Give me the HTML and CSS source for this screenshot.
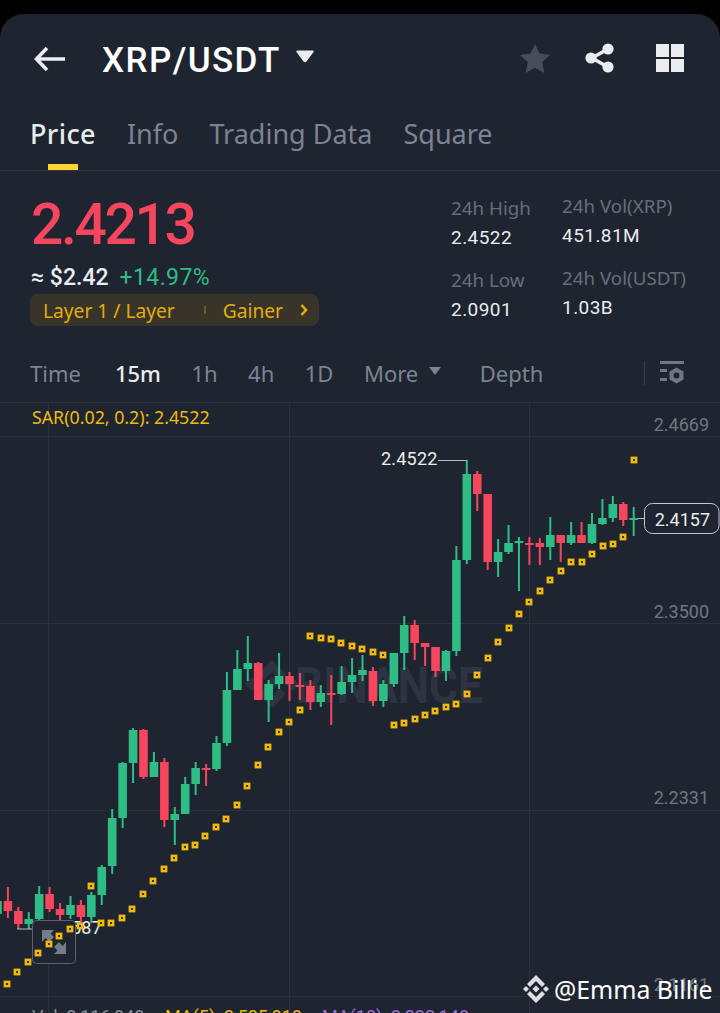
FILE: index.html
```html
<!DOCTYPE html>
<html lang="en">
<head>
    <meta charset="UTF-8">
    <meta name="viewport" content="width=device-width, initial-scale=1.0">
    <title>XRP/USDT</title>
    <link rel="stylesheet" href="styles.css">
</head>
<body>
    <div class="screen">
        <!-- top bar -->
        <div class="topbar">
            <svg class="back" width="32" height="26" viewBox="0 0 32 26">
                <path d="M13 2 L2.5 13 L13 24 M3 13 H31" fill="none" stroke="#eaecef" stroke-width="3.6"/>
            </svg>
            <span class="pair">XRP/USDT</span>
            <svg class="caret" width="18" height="13" viewBox="0 0 18 13">
                <path d="M1.5 0.5 H16.5 Q18.5 0.5 17.2 2.5 L10.5 11.5 Q9 13 7.5 11.5 L0.8 2.5 Q-0.5 0.5 1.5 0.5 Z" fill="#eaecef"/>
            </svg>
            <div class="actions">
                <svg class="star" width="30" height="29" viewBox="0 0 30 29">
                    <path d="M15 0 L19.4 9.6 L30 10.9 L22.2 18.1 L24.3 29 L15 23.7 L5.7 29 L7.8 18.1 L0 10.9 L10.6 9.6 Z" fill="#474d5c"/>
                </svg>
                <svg class="share" width="29" height="30" viewBox="0 0 29 30">
                    <path d="M22 6.5 L7 15 L22 23.5" fill="none" stroke="#eaecef" stroke-width="3.6"/>
                    <circle cx="23" cy="6" r="5.6" fill="#eaecef"/>
                    <circle cx="23" cy="24" r="5.6" fill="#eaecef"/>
                    <circle cx="6" cy="15" r="5.6" fill="#eaecef"/>
                </svg>
                <svg width="28" height="28" viewBox="0 0 28 28">
                    <rect x="0" y="0" width="13" height="13" fill="#eaecef"/>
                    <rect x="15" y="0" width="13" height="13" fill="#eaecef"/>
                    <rect x="0" y="15" width="13" height="13" fill="#eaecef"/>
                    <rect x="15" y="15" width="13" height="13" fill="#eaecef"/>
                </svg>
            </div>
        </div>

        <!-- tabs -->
        <div class="tabs">
            <span class="tab active">Price</span>
            <span class="tab">Info</span>
            <span class="tab">Trading Data</span>
            <span class="tab">Square</span>
        </div>

        <!-- price block -->
        <div class="summary">
            <div class="quote">
                <div class="last">2.4213</div>
                <div class="sub">
                    <span class="fiat">≈ $2.42</span>
                    <span class="change">+14.97%</span>
                </div>
                <div class="chip">
                    <span>Layer 1 / Layer</span>
                    <i class="chip-sep"></i>
                    <span>Gainer</span>
                    <svg width="8" height="12" viewBox="0 0 8 12">
                        <path d="M1.5 1 L6 6 L1.5 11" fill="none" stroke="#e2ad0c" stroke-width="2.6"/>
                    </svg>
                </div>
            </div>
            <div class="stats">
                <div class="stat-col low-col">
                    <div class="label">24h High</div>
                    <div class="value">2.4522</div>
                    <div class="label">24h Low</div>
                    <div class="value">2.0901</div>
                </div>
                <div class="stat-col">
                    <div class="label">24h Vol(XRP)</div>
                    <div class="value">451.81M</div>
                    <div class="label">24h Vol(USDT)</div>
                    <div class="value">1.03B</div>
                </div>
            </div>
        </div>

        <!-- period row -->
        <div class="periods">
            <span class="time">Time</span>
            <span class="current">15m</span>
            <span>1h</span>
            <span>4h</span>
            <span>1D</span>
            <span class="more">More</span>
            <svg class="more-caret" width="12" height="8" viewBox="0 0 12 8">
                <path d="M0 0 H12 L6 8 Z" fill="#7c8493"/>
            </svg>
            <span class="depth">Depth</span>
            <i class="period-sep"></i>
            <svg class="chart-set" width="24" height="24" viewBox="0 0 24 24">
                <rect x="0" y="0" width="24" height="3" fill="#6f7785"/>
                <rect x="0" y="8" width="7" height="3" fill="#6f7785"/>
                <rect x="0" y="17" width="7" height="3" fill="#6f7785"/>
                <path d="M16.5 6.5 L23.5 10.5 V18.5 L16.5 22.5 L9.5 18.5 V10.5 Z" fill="#6f7785"/>
                <circle cx="16.5" cy="14.5" r="3" fill="#1e2530"/>
            </svg>
        </div>

        <!-- chart: viewBox uses page coordinates -->
        <svg class="chart" width="720" height="610" viewBox="0 403 720 610">
            <g class="grid">
                <line x1="0" y1="436.5" x2="720" y2="436.5"/>
                <line x1="0" y1="623.5" x2="720" y2="623.5"/>
                <line x1="0" y1="810.5" x2="720" y2="810.5"/>
                <line x1="0" y1="996.5" x2="720" y2="996.5"/>
                <line x1="48.5" y1="403" x2="48.5" y2="1013"/>
                <line x1="289.5" y1="403" x2="289.5" y2="1013"/>
                <line x1="529.5" y1="403" x2="529.5" y2="1013"/>
            </g>

            <g class="mark">
                <path d="M272 660 L286 674 L280 680 L272 672 L264 680 L258 674 Z"/>
                <path d="M272 708 L286 694 L280 688 L272 696 L264 688 L258 694 Z"/>
                <path d="M272 677 L279 684 L272 691 L265 684 Z"/>
                <path d="M252 677 L259 684 L252 691 L245 684 Z"/>
                <path d="M292 677 L299 684 L292 691 L285 684 Z"/>
                <text x="295" y="703" textLength="188" lengthAdjust="spacingAndGlyphs">BINANCE</text>
            </g>

            <g id="candles"></g>

            <text class="legend" x="32" y="424">SAR(0.02, 0.2): 2.4522</text>
            <text class="axis" x="709" y="431" text-anchor="end">2.4669</text>
            <text class="axis" x="709" y="618" text-anchor="end">2.3500</text>
            <text class="axis" x="709" y="804" text-anchor="end">2.2331</text>
            <text class="axis" x="709" y="991" text-anchor="end">2.1161</text>

            <text class="extreme" x="381" y="465">2.4522</text>
            <line class="leader" x1="438" y1="460.5" x2="467" y2="460.5"/>
            <line class="leader" x1="17" y1="929" x2="33" y2="929"/>
            <text class="extreme" x="102" y="934" text-anchor="end">2.1587</text>

            <rect class="expand" x="32.5" y="920.5" width="43" height="43" rx="4"/>
            <path class="expand-arrow" d="M42 930 H54 L50.5 933.5 L54 937 L49 942 L45.5 938 L42 942 Z"/>
            <path class="expand-arrow" d="M66 954 H54 L57.5 950.500 L54 947 L59 942 L62.500 946 L66 942 Z"/>

            <g id="dots"></g>

            <line class="tag-dash" x1="638" y1="518.500" x2="645" y2="518.500"/>
            <rect class="tag" x="644.500" y="503.500" width="74.500" height="30" rx="8"/>
            <text class="tag-text" x="710" y="526" text-anchor="end">2.4157</text>

            <text class="vol gray" x="32" y="1023">Vol: 3,116,848</text>
            <text class="vol gold" x="165" y="1023">MA(5): 3,505,818</text>
            <text class="vol purple" x="322" y="1023">MA(10): 3,232,148</text>

            <g class="credit-logo">
                <path d="M536 975 L545 984 L542 987 L536 981 L530 987 L527 984 Z"/>
                <path d="M536 1003 L545 994 L542 991 L536 997 L530 991 L527 994 Z"/>
                <path d="M536 985.500 L539.500 989 L536 992.500 L532.500 989 Z"/>
                <path d="M526 986 L529 989 L526 992 L523 989 Z"/>
                <path d="M546 986 L549 989 L546 992 L543 989 Z"/>
            </g>
            <text class="credit" x="554" y="999">@Emma Billie</text>
        </svg>
    </div>

    <script src="chart.js"></script>
</body>
</html>
```

FILE: styles.css
```css
* {
    margin: 0;
    padding: 0;
    box-sizing: border-box;
}

body {
    background-color: #000;
    height: 1013px;
    overflow: hidden;
    font-family: "Noto Sans", sans-serif;
}

.screen {
    margin-top: 14px;
    height: 999px;
    background-color: #1e2530;
    border-radius: 24px 24px 0 0;
    overflow: hidden;
    display: flex;
    flex-direction: column;
}

/* top bar */
.topbar {
    height: 88px;
    flex-shrink: 0;
    padding: 0 36px 0 34px;
    display: flex;
    align-items: center;
}

.back {
    margin-top: 1px;
}

.pair {
    margin-left: 36px;
    font-family: Roboto, sans-serif;
    font-size: 35px;
    font-weight: 500;
    letter-spacing: 1.4px;
    color: #fff;
    margin-top: 4px;
}

.caret {
    margin-left: 15px;
    margin-bottom: 4px;
}

.actions {
    margin-left: auto;
    display: flex;
    align-items: center;
}

.star {
    margin-right: 35px;
}

.share {
    margin-right: 42px;
}

/* tabs */
.tabs {
    height: 69px;
    flex-shrink: 0;
    padding: 0 30px;
    display: flex;
    gap: 31px;
    border-bottom: 1px solid #2e3541;
}

.tab {
    position: relative;
    padding-top: 12px;
    font-size: 27px;
    line-height: 40px;
    color: #7c8493;
}

.tab.active {
    color: #eaecef;
    font-weight: 500;
    letter-spacing: 0.4px;
}

/* the yellow mark sits on the tab's bottom edge */
.tab.active::after {
    content: "";
    position: absolute;
    left: 18px;
    bottom: 0;
    width: 30px;
    height: 6px;
    background-color: #fcd535;
}

/* price block */
.summary {
    height: 179px;
    flex-shrink: 0;
    display: flex;
    justify-content: space-between;
    padding-left: 30px;
}

.last {
    margin-top: 27px;
    margin-left: 1px;
    font-family: Roboto, sans-serif;
    font-size: 57px;
    font-weight: 500;
    line-height: 54px;
    letter-spacing: -2.4px;
    color: #f6465d;
}

.sub {
    margin-top: 11px;
    margin-left: 1px;
    display: flex;
    gap: 11px;
    font-family: Roboto, sans-serif;
    font-size: 23px;
    line-height: 30px;
}

.fiat {
    color: #eaecef;
    font-weight: 500;
}

.change {
    color: #2ebd85;
    letter-spacing: 0.4px;
}

.chip {
    margin-top: 1px;
    width: 289px;
    height: 32px;
    padding: 0 11px 0 13px;
    display: flex;
    align-items: center;
    white-space: nowrap;
    border-radius: 8px;
    background-color: #38342a;
    color: #e2ad0c;
    font-size: 19.2px;
}

.chip-sep {
    width: 2px;
    height: 8px;
    margin-left: auto;
    margin-right: 17px;
    background-color: #6b5b24;
}

.chip svg {
    margin-left: 17px;
}

.stats {
    display: flex;
    padding: 23px 30px 0 0;
}

.stat-col {
    width: 111px;
}

.stat-col:last-child {
    width: 128px;
    margin-top: -2px;
}

.label {
    height: 30px;
    line-height: 28px;
    font-size: 18.8px;
    color: #666e7c;
    white-space: nowrap;
}

.value {
    height: 42px;
    line-height: 28px;
    font-family: Roboto, sans-serif;
    font-size: 19px;
    letter-spacing: 0.45px;
    color: #eaecef;
}

/* period row */
.periods {
    height: 53px;
    flex-shrink: 0;
    padding: 0 36px 6px 30px;
    display: flex;
    align-items: center;
    gap: 30.5px;
    font-size: 22px;
    color: #7c8493;
    border-bottom: 1px solid #2a313c;
}

.periods .time {
    margin-right: 3.5px;
}

.periods .current {
    color: #eaecef;
    font-weight: 500;
}

.more-caret {
    margin: 0 0 4px -19.5px;
}

.depth {
    margin-left: 8px;
}

.period-sep {
    width: 1px;
    height: 24px;
    margin-left: auto;
    background-color: #3a414d;
}

.chart-set {
    margin-left: -15px;
}

/* chart */
.chart {
    display: block;
    flex-shrink: 0;
}

.grid line {
    stroke: #2a313c;
    stroke-width: 1;
}

.mark path,
.mark text {
    fill: #2d3340;
}

.mark text {
    font-family: Roboto, sans-serif;
    font-size: 50px;
    font-weight: 700;
}

.legend {
    font-family: "Noto Sans", sans-serif;
    font-size: 17.8px;
    fill: #f0b90b;
}

.axis {
    font-family: Roboto, sans-serif;
    font-size: 18px;
    fill: #6f7785;
}

.extreme {
    font-family: Roboto, sans-serif;
    font-size: 18px;
    letter-spacing: 0.2px;
    fill: #eaecef;
}

.leader {
    stroke: #b7bdc6;
    stroke-width: 1;
}

.expand {
    fill: #1e2530;
    stroke: #5b6270;
    stroke-width: 1;
}

.expand-arrow {
    fill: #767d8a;
}

.tag-dash {
    stroke: #b7bdc6;
    stroke-width: 1;
}

.tag {
    fill: #1e2530;
    stroke: #c4c8cf;
    stroke-width: 1;
}

.tag-text {
    font-family: Roboto, sans-serif;
    font-size: 18px;
    fill: #eaecef;
}

.vol {
    font-family: Roboto, sans-serif;
    font-size: 18px;
}

.vol.gray {
    fill: #848e9c;
}

.vol.gold {
    fill: #f0b90b;
}

.vol.purple {
    fill: #a06bd6;
}

.credit-logo path {
    fill: #dcdee1;
}

.credit {
    font-family: "Noto Sans", sans-serif;
    font-size: 24.8px;
    fill: #fff;
}

.up {
    fill: #2ebd85;
}

.down {
    fill: #f6465d;
}

.sar {
    fill: #3a3420;
    stroke: #f0b90b;
    stroke-width: 2.4;
}
```

FILE: chart.js
```js
// candles from the newest one going left: [bodyTop, bodyBottom, wickTop, wickBottom, up?]
const candles = [
    [518, 520, 507, 536, 1], [504, 520, 502, 526, 0], [504, 518, 496, 522, 1], [518, 524, 499, 525, 1],
    [524, 543, 513, 544, 1], [535, 543, 522, 543, 0], [535, 543, 522, 545, 1], [535, 543, 535, 562, 0],
    [535, 547, 517, 560, 1], [543, 547, 538, 565, 0], [543, 545, 537, 565, 0], [541, 543, 537, 591, 1],
    [543, 552, 525, 554, 1], [552, 562, 539, 577, 1], [494, 562, 494, 570, 0], [474, 494, 471, 511, 0],
    [474, 560, 460, 564, 1], [560, 651, 546, 656, 1], [651, 671, 650, 681, 1], [647, 671, 647, 677, 0],
    [643, 647, 643, 666, 0], [625, 643, 620, 660, 0], [625, 653, 616, 670, 1], [653, 684, 653, 687, 1],
    [684, 701, 680, 707, 1], [671, 701, 667, 706, 0], [670, 675, 655, 681, 1], [675, 682, 658, 693, 1],
    [682, 694, 666, 695, 1], [693, 695, 675, 725, 0], [693, 702, 685, 707, 1], [686, 702, 680, 710, 0],
    [685, 687, 673, 700, 0], [676, 684, 672, 701, 0], [676, 684, 653, 689, 1], [684, 700, 680, 722, 1],
    [663, 700, 662, 700, 0], [663, 669, 636, 681, 1], [669, 690, 650, 690, 1], [690, 743, 672, 746, 1],
    [743, 769, 736, 771, 1], [768, 770, 764, 786, 0], [768, 784, 762, 795, 1], [784, 814, 777, 814, 1],
    [814, 820, 807, 845, 1], [762, 820, 758, 827, 0], [762, 777, 752, 777, 1], [730, 777, 729, 779, 0],
    [730, 763, 728, 783, 1], [763, 818, 762, 828, 1], [818, 866, 809, 874, 1], [867, 895, 865, 905, 1],
    [895, 917, 892, 923, 1], [905, 917, 900, 923, 0], [905, 915, 896, 919, 1], [909, 915, 903, 920, 0],
    [894, 909, 887, 912, 0], [894, 919, 886, 921, 1], [919, 924, 912, 929, 1], [911, 924, 907, 929, 0],
    [901, 911, 887, 918, 0], [901, 914, 895, 918, 1]
];

// SAR dots, page coordinates
const dots = [
    [7, 984], [17.3, 972], [28, 962], [38.3, 953], [48.7, 943.7], [59, 935.7], [69.7, 928.7], [80, 926],
    [90.5, 886], [101, 922.7], [111.3, 922.7], [122, 918.3], [132.3, 909], [142.7, 894.3], [153, 881],
    [163.7, 869], [174, 858], [184.7, 847.3], [195, 845], [205.3, 835.7], [216, 827], [226.3, 819],
    [236.7, 804.7], [247.3, 786], [257.7, 765], [268, 747], [278.7, 731.5], [289, 722], [299.5, 710],
    [310, 636.3], [320.7, 638], [331, 639.3], [341.3, 642.7], [352, 646], [362.3, 649], [372.7, 652], [383, 655],
    [393.7, 724.7], [404, 723.3], [414.7, 719], [425, 715], [435.3, 710.7], [445.7, 707], [456.3, 703.7],
    [466.7, 694], [477, 675.3], [487.7, 658], [497.7, 642], [508.7, 627.7], [519, 614.3], [529.3, 602],
    [540, 590.7], [550.3, 580.3], [560.7, 570.7], [571.3, 561.7], [581.7, 561.7], [592.3, 553.7],
    [602.7, 546], [613, 543.7], [623.3, 537], [634, 460.3]
];

const SVG_NS = 'http://www.w3.org/2000/svg';

function addRect(parent, x, y, w, h, cls) {
    let rect = document.createElementNS(SVG_NS, 'rect');
    rect.setAttribute('x', x);
    rect.setAttribute('y', y);
    rect.setAttribute('width', w);
    rect.setAttribute('height', h);
    rect.setAttribute('class', cls);
    parent.appendChild(rect);
}

let candleGroup = document.getElementById('candles');
candles.forEach(function (c, i) {
    let cx = 633.7 - 10.43 * i;
    let cls = c[4] ? 'up' : 'down';
    addRect(candleGroup, cx - 1, c[2], 2, c[3] - c[2], cls);
    addRect(candleGroup, cx - 4.3, c[0], 8.6, c[1] - c[0], cls);
});

let dotGroup = document.getElementById('dots');
dots.forEach(function (d) {
    addRect(dotGroup, Math.round(d[0]) - 2.2, Math.round(d[1]) - 2.2, 4.4, 4.4, 'sar');
});
```
